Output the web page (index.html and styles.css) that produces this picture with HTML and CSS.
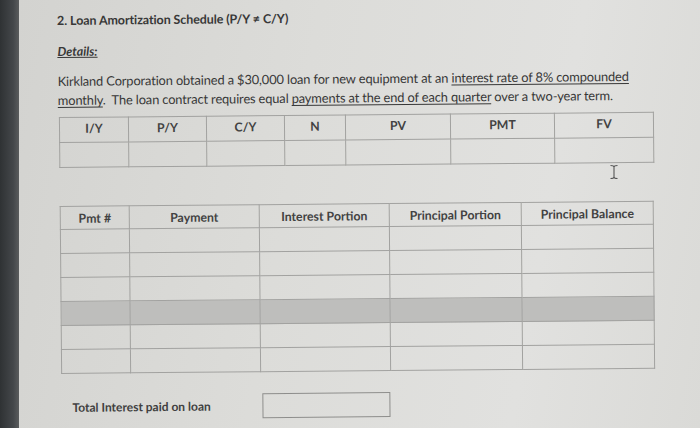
FILE: index.html
```html
<!DOCTYPE html>
<html>
<head>
<meta charset="utf-8">
<link rel="stylesheet" href="styles.css">
</head>
<body>
<div class="bezel"></div>
<div class="page">
  <div class="sheet">
    <div class="title">2. Loan Amortization Schedule (P/Y ≠ C/Y)</div>
    <div class="details">Details:</div>
    <p class="para">Kirkland Corporation obtained a $30,000 loan for new equipment at an <u>interest rate of 8% compounded</u><br><u>monthly</u>.&nbsp; The loan contract requires equal <u>payments at the end of each quarter</u> over a two-year term.</p>
    <table class="tvm">
      <colgroup><col style="width:69px"><col style="width:78px"><col style="width:78px"><col style="width:61px"><col style="width:105px"><col style="width:104px"><col style="width:99px"></colgroup>
      <tr class="hd"><th>I/Y</th><th>P/Y</th><th>C/Y</th><th>N</th><th>PV</th><th>PMT</th><th>FV</th></tr>
      <tr><td></td><td></td><td></td><td></td><td></td><td></td><td></td></tr>
    </table>
    <table class="amort">
      <colgroup><col style="width:69px"><col style="width:130px"><col style="width:130px"><col style="width:132px"><col style="width:132px"></colgroup>
      <tr class="hd"><th>Pmt #</th><th>Payment</th><th>Interest Portion</th><th>Principal Portion</th><th>Principal Balance</th></tr>
      <tr><td></td><td></td><td></td><td></td><td></td></tr>
      <tr><td></td><td></td><td></td><td></td><td></td></tr>
      <tr><td></td><td></td><td></td><td></td><td></td></tr>
      <tr class="shade"><td></td><td></td><td></td><td></td><td></td></tr>
      <tr><td></td><td></td><td></td><td></td><td></td></tr>
      <tr><td></td><td></td><td></td><td></td><td></td></tr>
    </table>
    <div class="total">
      <span class="total-label">Total Interest paid on loan</span>
      <span class="total-box"></span>
    </div>
  </div>
  <svg class="cursor" width="10" height="16" viewBox="0 0 10 16"><path d="M1.5 1.5 Q5 1.5 5 3 Q5 1.5 8.5 1.5 M5 3 V13 M1.5 14.5 Q5 14.5 5 13 Q5 14.5 8.5 14.5" fill="none" stroke="#555" stroke-width="1.1"/></svg>
</div>
</body>
</html>
```
FILE: styles.css
```css
html, body {
  margin: 0;
  padding: 0;
}
body {
  width: 700px;
  height: 428px;
  overflow: hidden;
  display: flex;
  font-family: Lato, "Noto Sans", sans-serif;
  color: #383838;
}
.bezel {
  width: 19px;
  flex: none;
  background: linear-gradient(90deg, #2f3234 0%, #44474a 70%, #5a5c5d 100%);
}
.page {
  flex: 1;
  position: relative;
  background: linear-gradient(100deg, #d3d3d0 0%, #dcdcd9 40%, #e1e1df 75%, #dadad7 100%);
  padding: 13px 0 0 38px;
}
.sheet {
  transform: rotate(-0.5deg);
  transform-origin: 0 0;
}
.title {
  font-weight: 700;
  font-size: 12.5px;
  line-height: 16px;
  letter-spacing: -0.1px;
}
.details {
  margin-top: 15px;
  font-weight: 700;
  font-style: italic;
  text-decoration: underline;
  font-size: 12.5px;
  line-height: 16px;
}
.para {
  margin: 12px 0 0 0;
  font-size: 12.9px;
  line-height: 19px;
  letter-spacing: -0.15px;
}
.para u {
  text-decoration-thickness: 1px;
  text-underline-offset: 2px;
}
table {
  border-collapse: collapse;
  table-layout: fixed;
}
th, td {
  border: 1px solid #a2a2a0;
  padding: 0;
}
th {
  font-size: 12.3px;
  font-weight: 700;
  color: #424242;
}
.tvm {
  margin: 7px 0 0 1px;
}
.tvm tr { height: 25px; }
.tvm th { padding-bottom: 3px; }
.amort {
  margin: 38px 0 0 1px;
}
.amort tr { height: 24px; }
.amort tr.hd { height: 23px; }
.amort .shade td {
  background: #bebebc;
}
.total {
  display: flex;
  align-items: center;
  margin: 21px 0 0 12px;
}
.total-label {
  font-weight: 700;
  font-size: 12px;
  width: 190px;
  color: #404040;
}
.total-box {
  width: 126px;
  height: 23px;
  border: 1px solid #8e8e8c;
}
.cursor {
  position: absolute;
  left: 590px;
  top: 164px;
}
```
